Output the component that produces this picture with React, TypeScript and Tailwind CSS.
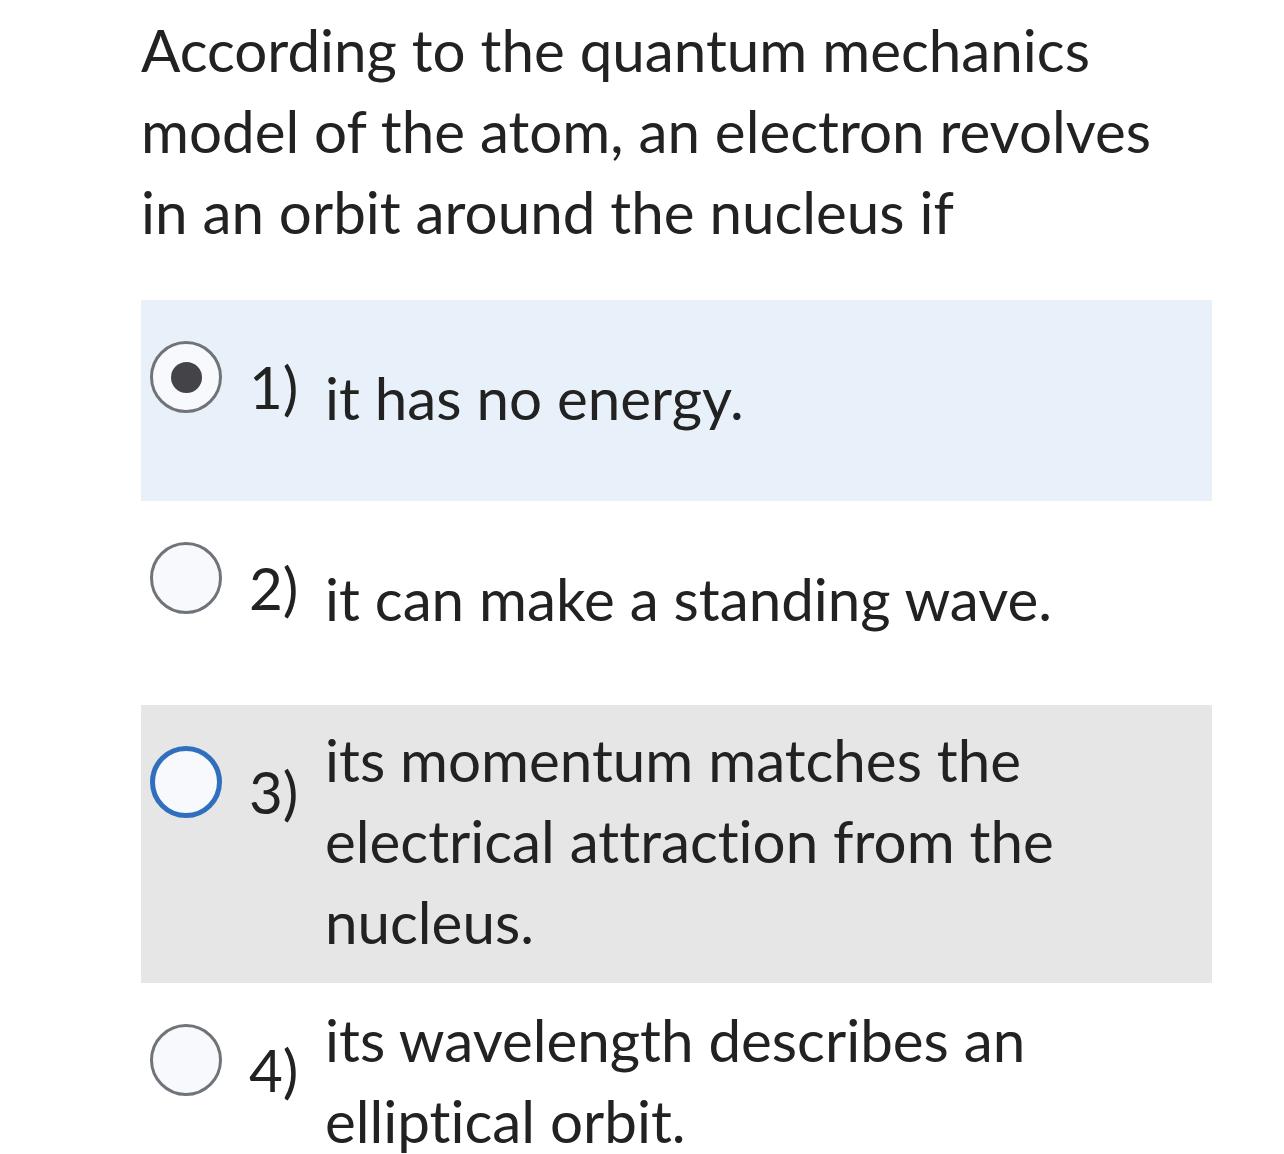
import React from 'react';

type Option = {
  num: string;
  text: string;
  state: 'selected' | 'focused' | 'idle';
};

const options: Option[] = [
  { num: '1)', text: 'it has no energy.', state: 'selected' },
  { num: '2)', text: 'it can make a standing wave.', state: 'idle' },
  { num: '3)', text: 'its momentum matches the electrical attraction from the nucleus.', state: 'focused' },
  { num: '4)', text: 'its wavelength describes an elliptical orbit.', state: 'idle' },
];

const Radio: React.FC<{ state: Option['state'] }> = ({ state }) => {
  if (state === 'focused') {
    return (
      <div className="w-[72px] h-[72px] shrink-0 rounded-full border-[5px] border-[#2f6fbd] bg-[#f7f9fd]" />
    );
  }
  return (
    <div className="w-[72px] h-[72px] shrink-0 rounded-full border-[3px] border-[#707478] bg-[#f7f9fd] flex items-center justify-center">
      {state === 'selected' && <div className="w-[31px] h-[31px] rounded-full bg-[#444448]" />}
    </div>
  );
};

const App: React.FC = () => {
  return (
    <div className="min-h-screen bg-white text-[#222222] font-['Lato','Liberation_Sans',sans-serif] [font-variant-ligatures:none]">
      <div className="pl-[141px] w-[1212px]">
        {/* Question */}
        <p className="pt-[9px] w-[1050px] text-[58.3px] leading-[81px]">
          According to the quantum mechanics model of the atom, an electron revolves in an orbit around the nucleus if
        </p>

        {/* Answers */}
        <div className="mt-[48px] flex flex-col">
          {options.map((o, i) => (
            <div
              key={o.num}
              className={
                'flex items-start pl-[9px] pt-[14px] ' +
                (i === 1 ? 'pb-[24px] ' : 'pb-[21px] ') +
                (o.state === 'selected' ? 'bg-[#e8f0fa]' : o.state === 'focused' ? 'bg-[#e6e6e6]' : '')
              }
            >
              <div className="flex items-center w-[175px] shrink-0 mt-[25px]">
                <Radio state={o.state} />
                <span className="ml-[27px] mt-[18px] text-[58.3px] leading-[58px]">{o.num}</span>
              </div>
              <div className="flex-1 min-h-[166px] flex items-center pr-[20px]">
                <span className="text-[58.3px] leading-[81px]">{o.text}</span>
              </div>
            </div>
          ))}
        </div>
      </div>
    </div>
  );
};

export default App;
